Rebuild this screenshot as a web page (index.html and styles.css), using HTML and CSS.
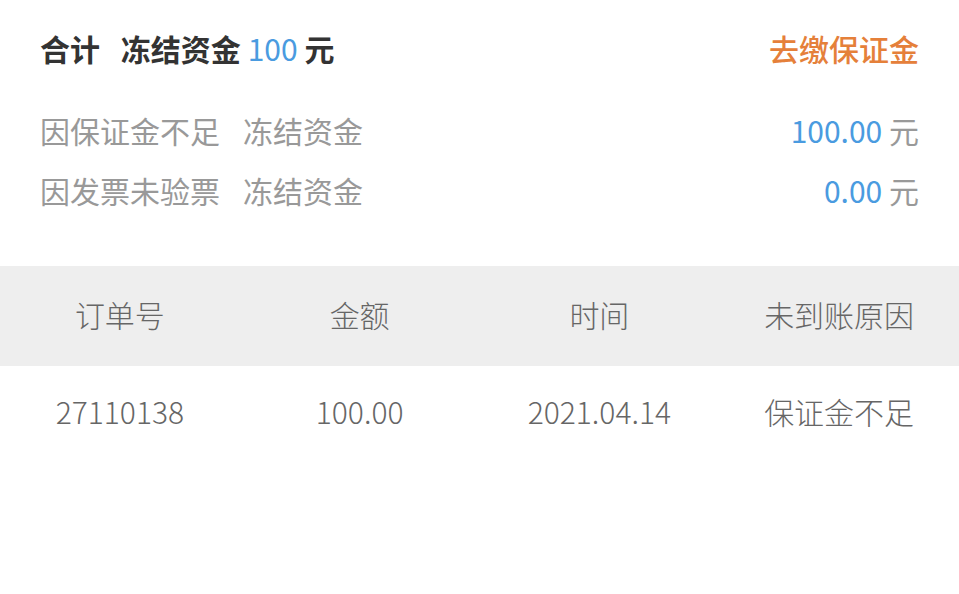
FILE: index.html
```html
<!DOCTYPE html>
<html lang="zh-CN">
<head>
    <meta charset="UTF-8">
    <meta name="viewport" content="width=device-width, initial-scale=1.0">
    <title>冻结资金</title>
    <link rel="stylesheet" href="styles.css">
</head>
<body>

    <div class="summary">
        <div class="summary-head">
            <div class="total">
                <span class="total-label">合计</span>
                <span>冻结资金 <span class="num">100</span> 元</span>
            </div>
            <a class="pay-link">去缴保证金</a>
        </div>
        <div class="detail-row">
            <span><span class="reason">因保证金不足</span>冻结资金</span>
            <span><span class="num">100.00</span> 元</span>
        </div>
        <div class="detail-row">
            <span><span class="reason">因发票未验票</span>冻结资金</span>
            <span><span class="num">0.00</span> 元</span>
        </div>
    </div>

    <table class="orders">
        <thead>
            <tr>
                <th>订单号</th>
                <th>金额</th>
                <th>时间</th>
                <th>未到账原因</th>
            </tr>
        </thead>
        <tbody>
            <tr>
                <td>27110138</td>
                <td>100.00</td>
                <td>2021.04.14</td>
                <td>保证金不足</td>
            </tr>
        </tbody>
    </table>

</body>
</html>
```

FILE: styles.css
```css
body {
    margin: 0;
    background-color: #fff;
    font-family: "Noto Sans CJK SC", "Noto Sans", sans-serif;
    font-size: 30px;
}

.summary {
    padding: 28px 40px 46px;
}

.summary-head {
    display: flex;
    justify-content: space-between;
    line-height: 40px;
    margin-bottom: 32px;
}

.total {
    color: #333;
    font-weight: 600;
}

.total-label {
    margin-right: 14px;
}

.num {
    color: #4a9be0;
    font-weight: 400;
}

.pay-link {
    color: #e5803a;
    font-weight: 500;
}

.detail-row {
    display: flex;
    justify-content: space-between;
    line-height: 60px;
    color: #999;
}

.reason {
    margin-right: 23px;
}

.orders {
    width: 100%;
    border-collapse: collapse;
    table-layout: fixed;
    color: #666;
    font-weight: 300;
}

.orders th {
    height: 96px;
    padding: 0 0 4px;
    background-color: #eee;
    font-weight: 300;
}

.orders td {
    height: 90px;
    padding: 0 0 6px;
    text-align: center;
}
```
